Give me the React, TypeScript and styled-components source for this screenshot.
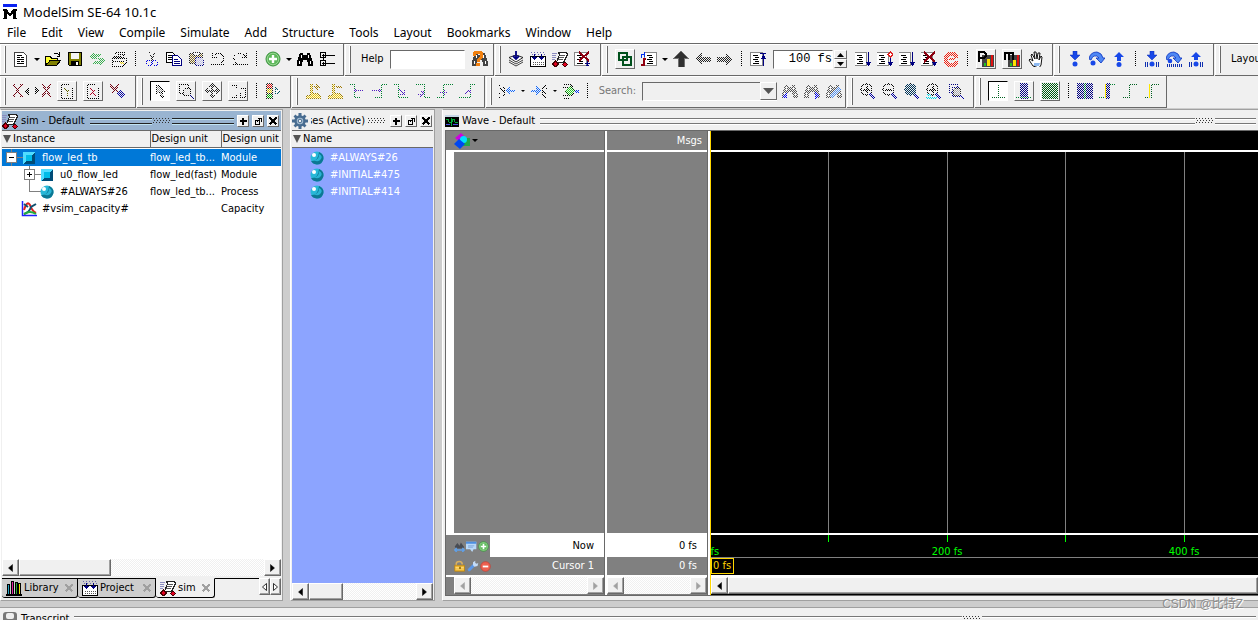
import React from "react";
import styled, { createGlobalStyle, css } from "styled-components";

const GlobalStyle = createGlobalStyle`
  *, *::before, *::after { box-sizing: border-box; }
  html, body { margin: 0; padding: 0; }
  body { background: #f0f0f0; color: #000; overflow: hidden; }
  body, button, input, select, table {
    font-family: "DejaVu Sans Condensed", "Noto Sans", sans-serif;
    font-size: 11px;
    line-height: 14px;
  }
  button { padding: 0; border: 0; background: none; color: inherit; }
`;

/* ---------- icons ---------- */

const navy = "#000080";

const doc = (
  <>
    <path d="M1.500 1.500h9l3 3v11h-12z" fill="#fff" stroke="#444" />
    <path d="M4 4.500h5M4 6.500h3M8 6.500h3M4 8.500h7M4 10.500h3M8 10.500h3M4 12.500h7" stroke="#000" />
  </>
);

const page = (
  <>
    <path d="M.5 1.500h12v13h-12z" fill="#fff" stroke="#888" />
    <path d="M3 4.500h5M5 6.500h4M3 8.500h5M5 10.500h4M3 12.500h6" stroke="#000" />
  </>
);

const binoculars = (
  <>
    <path d="M3 2h3v2h4V2h3l3 9v4h-5v-4h-1V9H6v2H5v4H0v-4z" />
    <path d="M4.500 4v3M11.500 4v3M2.500 10v3M13.500 10v3" stroke="#fff" />
  </>
);

const magnifier = (
  <>
    <circle cx="6.500" cy="6.500" r="5.500" fill="none" stroke="#111" />
    <path d="M10 11l5 5" stroke="#0000a0" strokeWidth="2" />
  </>
);

const car = (
  <>
    <path d="M6.500 1.500h8l1 2-4 8h-7l3-8z" fill="#fff" stroke="#222" />
    <path d="M8 4.500h5M7 6.500h5M6 8.500h5" stroke="#555" />
    <path d="M0 2.500h5M0 4.500h4M0 6.500h4M0 8.500h3" stroke="#8c8cc0" />
    <path d="M3.500 10l3 3-3 3-3-3z" fill="#e00020" stroke="#400" />
    <path d="M13 11l2.500 2.500L13 16l-2.500-2.500z" fill="#e00020" stroke="#400" />
  </>
);

const edge = (d: string, m: string) => (
  <>
    <path d={d} fill="none" stroke="#008030" />
    <path d={m} fill="none" stroke="#5020c0" />
  </>
);

const downArrow = (
  <path d="M6 0h4v4h3l-5 5-5-5h3z" fill="#1848e8" stroke="#0828b0" strokeWidth=".5" />
);

const curve = (
  <path d="M0 8Q1 1 8 1q5 1 6 6h2l-4 5-5-5h3Q8 4 5 5 3 6 2 9z" fill="#4f88f4" stroke="#0830c0" strokeWidth=".8" />
);

const footMarks = <path d="M1.500 11v5M3.500 11v5M12.500 11v5M14.500 11v5" stroke="#1030b0" />;

const icons: Record<string, React.ReactNode> = {
  logo: (
    <>
      <path d="M1 0h14v3H1z" fill="#0a22f0" />
      <path d="M1 15v-1h1V7H1V5h4l3 5 3-5h4v2h-1v7h1v1h-4V9l-3 4-3-4v6z" />
    </>
  ),
  doc,
  open: (
    <>
      <path d="M.5 14V5.500h5l1 2h6V10H5z" fill="#ffff30" stroke="#000" />
      <path d="M1 14.500l4-5h10.500l-4 5z" fill="#808000" stroke="#000" />
      <path d="M9 3q2-2 4 0l1 1m.5-3v4h-3" fill="none" stroke="#000" />
    </>
  ),
  save: (
    <>
      <path d="M1.500 1.500h13v13h-12l-1-1z" fill="#808000" stroke="#000" />
      <path d="M4 2h8v6H4z" fill="#f4f4f4" />
      <path d="M4 10h8v5H4z" />
      <path d="M9 11h2v3H9z" fill="#fff" />
    </>
  ),
  refresh: (
    <path d="M0 6l4-4 3 1h6l-2 3H6l2 2H2zM16 10l-4 5-3-2H4l1-3h5L9 7h5z" fill="#3aae50" />
  ),
  print: (
    <>
      <path d="M5 1.500h9l-2 5H3zM1 7.500h14v5l-3 3H1z" fill="#f6f6f6" stroke="#000" />
      <path d="M6 3.500h6M5 5.500h5M2 10.500h12" stroke="#000" />
      <path d="M9 11h4v2H9z" fill="#f0d000" />
    </>
  ),
  cut: (
    <>
      <path d="M5 1l4 9M11 1L7 10" stroke="#222" />
      <circle cx="5" cy="12" r="2.500" fill="none" stroke="#0000e0" />
      <circle cx="11" cy="12" r="2.500" fill="none" stroke="#0000e0" />
    </>
  ),
  copy: (
    <>
      <path d="M.5 1.500h6l3 3v7h-9z" fill="#fff" stroke="#000" />
      <path d="M2 4.500h4M2 6.500h5M2 8.500h5" stroke="#000" />
      <path d="M6.500 4.500h5l4 4v6h-9z" fill="#fff" stroke={navy} />
      <path d="M8 8.500h4M8 10.500h6M8 12.500h6" stroke={navy} />
    </>
  ),
  paste: (
    <>
      <path d="M1.500 2.500h13v10h-13z" fill="#806820" stroke="#222" />
      <path d="M5 1h6v3H5z" fill="#fff" stroke="#222" />
      <path d="M7.500 6.500h6l2 2v6h-8z" fill="#c0c0e8" stroke={navy} />
    </>
  ),
  undo: <path d="M2 1v5h5M2 6q4-5 9-3 5 3 2 7l-2 3M0 13.500h15" fill="none" stroke="#000" />,
  redo: <path d="M14 1v5H9M14 6q-4-5-9-3-5 3-2 7l2 3M1 13.500h15" fill="none" stroke="#000" />,
  add: (
    <g shapeRendering="auto">
      <circle cx="8" cy="8" r="7" fill="#5db85a" stroke="#3c9440" />
      <circle cx="8" cy="8" r="5.800" fill="none" stroke="#a8dca2" strokeWidth=".8" />
      <path d="M8 4v8M4 8h8" stroke="#fff" strokeWidth="2.400" />
    </g>
  ),
  remove: (
    <g shapeRendering="auto">
      <circle cx="8" cy="8" r="7" fill="#ec6050" stroke="#c43c30" />
      <path d="M4 8h8" stroke="#fff" strokeWidth="2.600" />
    </g>
  ),
  binoculars,
  binocHelp: (
    <>
      <g fill="#444">{binoculars}</g>
      <path d="M2 5q0-4 4-4t4 4q0 2-4 4v2" fill="none" stroke="#f08010" strokeWidth="3" />
      <path d="M4 12h4v3H4z" fill="#f08010" />
    </>
  ),
  tree: (
    <path d="M1.500 1.500h5v5h-5zM3 4.500h3M1.500 9.500h5v5h-5zM3 12.500h3M4.500 7v3M7 4.500h9M7 12.500h9M4.500 3v3M4.500 11v3" fill="none" stroke="#000" />
  ),
  compile: (
    <g shapeRendering="auto">
      <path d="M1 11l7 4 7-4M1 9l7 4 7-4" fill="#fff" stroke="#111" strokeWidth=".8" />
      <path d="M1 6.500L8 4l7 2.500L8 11z" fill="#fff" stroke="#111" strokeWidth=".9" />
      <path d="M8 0v7M5 5l3 3 3-3" fill="none" stroke={navy} strokeWidth="1.800" />
    </g>
  ),
  compileAll: (
    <>
      <path d="M.5 5.500h15v10H.5z" fill="#fff" stroke="#000" />
      <path d="M1 1.500h15M2 3.500h14" stroke="#6868b0" strokeDasharray="1 2" />
      <path d="M4.500 3v6M11.500 3v6" stroke={navy} />
      <path d="M2 6h5v1H6v1H3V7H2zM9 6h5v1h-1v1h-3V7H9z" fill={navy} />
      <path d="M3 11.500h11M3 13.500h11" stroke="#555" strokeDasharray="1 1" />
    </>
  ),
  car,
  breakSim: (
    <>
      {page}
      <path d="M5 1l10 9M15 1L5 10" stroke="#8c0010" strokeWidth="2" />
      <path d="M13.500 10v5M11 12.500h5M12 14.500h3" fill="none" stroke={navy} />
    </>
  ),
  link: (
    <g fill="none" stroke="#00501c" strokeWidth="2">
      <path d="M2 2h8v7H2z" />
      <path d="M6 6h8v8H6z" />
    </g>
  ),
  restart: (
    <>
      <g transform="translate(3 0)">{page}</g>
      <path d="M.5 7V3H4M3 1v5" fill="none" stroke="#0030f0" />
      <path d="M0 14h3V8h2" fill="none" stroke="#900010" strokeWidth="2" />
    </>
  ),
  up: <path d="M8 0l7 7h-4v9H5V7H1z" fill="#303030" stroke="#707070" />,
  left: <path d="M0 8l7-6v4h9v5H7v4z" fill="#222" />,
  right: <path d="M16 8L9 2v4H0v5h9v4z" fill="#222" />,
  runTo: (
    <>
      {page}
      <path d="M10 2.500h6M13.500 3v12" fill="none" stroke={navy} />
      <path d="M13 3h1v2h1v2h1v1h-5V7h1V5h1z" fill={navy} />
    </>
  ),
  run: (
    <>
      <g transform="translate(-1 0)">{page}</g>
      <path d="M13.500 1v13" stroke={navy} />
      <path d="M11 11h5v1h-1v2h-1v1h-1v-1h-1v-2h-1z" fill={navy} />
    </>
  ),
  runContinue: (
    <>
      <g transform="translate(-1 0)">{page}</g>
      <path d="M13.500 7v7" stroke={navy} />
      <path d="M11 11h5v1h-1v2h-1v1h-1v-1h-1v-2h-1z" fill={navy} />
      <path d="M13.500 1L16 3.500 13.500 6 11 3.500z" fill="#fff" stroke="#e02020" />
    </>
  ),
  runStop: (
    <>
      <g transform="translate(-1 0)">{page}</g>
      <path d="M3 1l11 10M14 1L3 11" stroke="#8c0010" strokeWidth="2" />
      <path d="M11 11h5v1h-1v2h-1v1h-1v-1h-1v-2h-1z" fill={navy} />
    </>
  ),
  stop: (
    <path d="M4 1h7l4 4v2h-4L9 5H7L5 7v3l2 2h2l2-2h4v2l-4 4H4l-3-4V5zM6 7h6v2H6z" fill="#f02010" />
  ),
  profileP: (
    <>
      <path d="M4 4h12v12H4z" fill="#444" />
      <path d="M6 12h2v3H6z" fill="#20c020" />
      <path d="M9 8h3v7H9z" fill="#ffe000" />
      <path d="M13 4h2v11h-2z" fill="#e01010" />
      <path d="M0 0h6l3 2v4L6 8H2v3H0zM2 2v4h4l1-2-1-2z" fillRule="evenodd" />
    </>
  ),
  profileM: (
    <>
      <path d="M4 4h12v12H4z" fill="#444" />
      <path d="M6 12h2v3H6z" fill="#20c020" />
      <path d="M9 9h3v6H9z" fill="#ffe000" />
      <path d="M13 4h2v11h-2z" fill="#e01010" />
      <path d="M0 1h9l1 1v7H8V3H6v6H4V3H2v6H0z" />
    </>
  ),
  hand: (
    <g shapeRendering="auto">
      <path d="M5 15L1 9l1-1 3 2-2-6 1-1 3 5-1-7h2l1 7 1-6h2l-1 7 2-4 1 1-1 8-2 3z" fill="#fff" stroke="#111" />
      <path d="M6 12h6l-1 3H6z" fill="#8cb8f0" />
    </g>
  ),
  stepInto: (
    <g shapeRendering="auto">
      {downArrow}
      <circle cx="8" cy="13" r="2.500" fill="#1848e8" />
    </g>
  ),
  stepOver: (
    <g shapeRendering="auto">
      {curve}
      <circle cx="4" cy="12" r="2.500" fill="#1848e8" />
    </g>
  ),
  stepOut: (
    <g shapeRendering="auto">
      <path d="M6 10V6H3l5-5 5 5h-3v4z" fill="#1848e8" />
      <circle cx="8" cy="13.500" r="2.500" fill="#1848e8" />
    </g>
  ),
  stepIntoB: (
    <>
      <g shapeRendering="auto">
        {downArrow}
        <circle cx="8" cy="13" r="2.500" fill="#1848e8" />
      </g>
      {footMarks}
    </>
  ),
  stepOverB: (
    <>
      <g shapeRendering="auto">
        {curve}
        <circle cx="4" cy="10" r="2.300" fill="#1848e8" />
      </g>
      <path d="M1 14.500h15" stroke="#1030b0" strokeWidth="3" strokeDasharray="1 1" />
    </>
  ),
  stepOutB: (
    <>
      <g shapeRendering="auto">
        <path d="M6 9V6H3l5-5 5 5h-3v3z" fill="#1848e8" />
        <circle cx="8" cy="13" r="2.500" fill="#1848e8" />
      </g>
      {footMarks}
    </>
  ),
  crossLeft: (
    <>
      <path d="M0 1l9 13M9 1L0 14" stroke="#700010" strokeWidth="2" />
      <path d="M16 3v9l-5-4z" />
    </>
  ),
  crossRight: (
    <>
      <path d="M7 1l9 13M16 1L7 14" stroke="#700010" strokeWidth="2" />
      <path d="M0 3v9l5-4z" />
    </>
  ),
  sheetY: (
    <>
      <path d="M2.500 1.500h8l3 3v11h-11z" fill="none" stroke="#000" />
      <path d="M5 5l3 4 3-4M8.500 9v5" fill="none" stroke="#606000" />
    </>
  ),
  sheetX: (
    <>
      <path d="M2.500 1.500h8l3 3v11h-11z" fill="none" stroke="#000" />
      <path d="M5 5l6 8M11 5l-6 8" fill="none" stroke="#b00020" />
    </>
  ),
  crossTag: (
    <>
      <path d="M1 2l9 8M10 1L3 10" stroke="#700010" strokeWidth="2" />
      <path d="M8 9l3-2 5 5-3 4-5-4z" fill="#0808a0" />
    </>
  ),
  pointer: <path d="M4 1v11l3-3 3 6 2-1-3-6h4z" fill="#999" stroke="#000" />,
  zoomArea: (
    <>
      <path d="M1.500 1.500h9v9h-9z" fill="none" stroke="#000" />
      <circle cx="9" cy="9" r="4" fill="#ddd" stroke="#000" />
      <path d="M12 12l4 4" stroke={navy} strokeWidth="2" />
    </>
  ),
  move: <path d="M8 0l4 4H9v3h3V4l4 4-4 4V9H9v3h3l-4 4-4-4h3V9H4v3L0 8l4-4v3h3V4H4z" fill="#222" />,
  edgeBox: <path d="M1 2.500h5.500V6M6.500 11v3.500H1M10 14.500h5.500v-9H10M10.500 10v5" fill="none" stroke="#000" />,
  traffic: (
    <>
      <path d="M1 0h7v16H1z" fill="#222" />
      <path d="M2 1h5v4H2z" fill="#e00000" />
      <path d="M2 6h5v4H2z" fill="#e0c000" />
      <path d="M2 11h5v4H2z" fill="#00b000" />
      <path d="M10 4l5 4-5 4z" fill="#fff" stroke="#005060" />
    </>
  ),
  cursorAdd: (
    <>
      <path d="M5 1h2v9h6v2h2v3H1v-3h4z" fill="#f0c800" stroke="#a08000" />
      <path d="M9 4h6M12 1v6" stroke="#a07800" strokeWidth="2" />
    </>
  ),
  cursorDel: (
    <>
      <path d="M5 1h2v9h6v2h2v3H1v-3h4z" fill="#f0c800" stroke="#a08000" />
      <path d="M9 4h6" stroke="#a07800" strokeWidth="2" />
    </>
  ),
  edge1: edge("M0 1.500h5.500v13H12", "M14 7.500H7M10 4L6 7.500 10 11"),
  edge2: edge("M4 14.500h6.500v-13H16", "M0 7.500h8M5 4l4 3.500L5 11"),
  edge3: edge("M0 1.500h5.500v13H16", "M6 6l5 5M11 6v5H6"),
  edge4: edge("M0 1.500h9.500v13H16", "M2 11h6M5 8l4 3-4 3M8 7v4"),
  edge5: edge("M0 14.500h6.500v-13H16", "M3 9h7M7 6v7"),
  edge6: edge("M0 14.500h11.500v-13H16", "M5 11l7-4M9 7l3 4"),
  mergeLeft: (
    <>
      <path d="M0 2l5 3v7l-5 3M0 5l5 3-5 3" fill="none" stroke="#000" />
      <path d="M16 7H11V3L6 8l5 5V9h5z" fill="#1068ff" />
    </>
  ),
  mergeRight: (
    <>
      <path d="M16 2l-5 3v7l5 3M16 5l-5 3 5 3" fill="none" stroke="#000" />
      <path d="M0 7h5V3l5 5-5 5V9H0z" fill="#1068ff" />
    </>
  ),
  mergeBoth: (
    <>
      <path d="M0 1h7l4 5M0 4h5M0 12h5M0 15h7l4-5" fill="none" stroke="#000" />
      <path d="M7 3l5 5-5 5-5-5z" fill="#20d020" stroke="#006000" />
      <path d="M12 8h4" stroke="#0030f0" strokeWidth="3" />
    </>
  ),
  findPrev: (
    <>
      <g fill="#555">{binoculars}</g>
      <path d="M0 13l5-4v7z" fill="#0000f0" />
    </>
  ),
  findNext: (
    <>
      <g fill="#555">{binoculars}</g>
      <path d="M16 13l-5-4v7z" fill="#0000f0" />
    </>
  ),
  findTool: (
    <>
      <g fill="#555">{binoculars}</g>
      <path d="M5 14l9-9" stroke="#5090f0" strokeWidth="3" />
    </>
  ),
  zoomIn: (
    <>
      {magnifier}
      <path d="M6.500 3v7M3 6.500h7" stroke="#000" strokeWidth="2" />
    </>
  ),
  zoomOut: (
    <>
      {magnifier}
      <path d="M3 6.500h7" stroke="#000" strokeWidth="2" />
    </>
  ),
  zoomFull: (
    <>
      {magnifier}
      <circle cx="6.500" cy="6.500" r="6" fill="#003458" />
    </>
  ),
  zoomCursor: (
    <>
      {magnifier}
      <path d="M6.500 3v7M3 6.500h7" stroke="#000" strokeWidth="2" />
      <path d="M0 15h11M1 12h4" stroke="#00d8e8" strokeWidth="2" />
    </>
  ),
  zoomRange: (
    <>
      <path d="M1.500 1.500h8v8h-8zM4.500 4.500h7v9h-7z" fill="none" stroke={navy} />
      <circle cx="9" cy="9" r="4" fill="#aaa" stroke="#222" />
      <path d="M12 12l4 4" stroke="#0000a0" strokeWidth="2" />
    </>
  ),
  waveLine: <path d="M8.500 2v12M1 14.500h15" stroke="#006020" />,
  waveBand: (
    <>
      <path d="M4 0h8v16H4z" fill={navy} />
      <path d="M0 14.500h16" stroke="#008030" />
    </>
  ),
  waveFill: <path d="M0 0h16v16H0z" fill="#005c10" />,
  waveBlock: (
    <>
      <path d="M0 0h16v16H0z" fill={navy} />
      <path d="M8 0v16" stroke="#008030" strokeWidth="2" />
    </>
  ),
  waveEdgeBand: (
    <>
      <path d="M7 0h4v16H7z" fill={navy} />
      <path d="M0 14.500h5M11 1.500h5" fill="none" stroke="#008030" />
    </>
  ),
  waveEdge: <path d="M1 14.500h7.500v-13H16" fill="none" stroke="#006020" />,
  yellowBar: <path d="M5 0h1v16H5z" fill="#ffe800" />,
  block: (
    <>
      <path d="M2 2h12v12H2z" fill="#00bce8" />
      <path d="M2 2h12l-3 3H5v6l-3 3z" fill="#50dcff" />
      <path d="M14 2v12H2l3-3h6V5z" fill="#004c78" />
    </>
  ),
  ball: (
    <g shapeRendering="auto">
      <circle cx="8" cy="8" r="6.500" fill="#28b8d8" />
      <path d="M2 11Q9 12 10 2q5 2 4.500 7-1.500 6-7 5.500-4-.5-5.500-3.500z" fill="#0c7894" />
      <path d="M5 10Q10 10 10 4q4 2 2 5-3 4-7 1z" fill="#28b4d4" />
      <circle cx="5" cy="5" r="2" fill="#fff" />
    </g>
  ),
  capacity: (
    <g shapeRendering="auto">
      <path d="M1.500 0v14.500H16" fill="none" stroke="#2020ff" strokeWidth="1.500" />
      <path d="M3 9q3-10 6-5 2 6 6 8" fill="none" stroke="#e02020" strokeWidth="2" />
      <path d="M3 13q5-1 7-7l5-3M3 3l4 3" fill="none" stroke="#105070" strokeWidth="2" />
      <path d="M3 13q6-4 12 0" fill="none" stroke="#20b040" strokeWidth="2" />
    </g>
  ),
  gear: (
    <g shapeRendering="auto">
      <path d="M6.500 0h3v3h-3zM6.500 13h3v3h-3zM0 6.500h3v3H0zM13 6.500h3v3h-3zM1.500 3.500l2-2L6 4 4 6zM10 4l2.500-2.500 2 2L12 6zM4 10l2 2-2.500 2.500-2-2zM12 10l2.500 2.500-2 2L10 12z" fill="#486c90" />
      <circle cx="8" cy="8" r="4.500" fill="#a8c0d4" stroke="#486c90" strokeWidth="2.500" />
      <circle cx="8" cy="8" r="1.800" fill="#f0f0f0" stroke="#486c90" />
    </g>
  ),
  wave: (
    <>
      <path d="M0 1h16v14H0z" fill="#000" />
      <path d="M0 1h16v2H0z" fill="#c8d8e8" />
      <path d="M1 6.500h3v3h4v-3h3v3h4M7.500 5v9" fill="none" stroke="#00c040" />
      <path d="M1 12.500h5M9 12.500h6" stroke="#5060ff" />
    </>
  ),
  shapes: (
    <g shapeRendering="auto">
      <path d="M1 5l6-5 4 4-5 5z" fill="#d000e0" />
      <path d="M8 5h8v8H8z" fill="#20a848" />
      <circle cx="9.500" cy="6.500" r="3.500" fill="#00e0ff" />
      <path d="M5 6l6 5-5 5-6-5z" fill="#0048f0" />
    </g>
  ),
  library: (
    <>
      <path d="M0 14h16v2H0z" />
      <path d="M1.500 4.500h2v10h-2z" fill="#20a0c0" stroke="#000" />
      <path d="M5.500 1.500h2v13h-2z" fill="#e020a0" stroke="#000" />
      <path d="M9.500 2.500h2v12h-2z" fill="#20a030" stroke="#000" />
      <path d="M12.500 3.500h2v11h-2z" fill="#f0e000" stroke="#000" />
    </>
  ),
  edit: (
    <g shapeRendering="auto">
      <path d="M1 8l4-5 3 4 2-5 5 7-3 2H3z" fill="#484c54" />
      <path d="M1 13h14M4 10l-3 3 3 3M12 10l3 3-3 3" fill="none" stroke="#60a0e8" strokeWidth="2" />
    </g>
  ),
  form: (
    <g shapeRendering="auto">
      <path d="M0 1h15v11h-4l-2 4-3-4H0z" fill="#b8d8f8" />
      <path d="M0 1h15v3H0z" fill="#4c8ee0" />
      <path d="M3 7h9M3 9h7" stroke="#6c98d0" />
    </g>
  ),
  lock: (
    <g shapeRendering="auto">
      <path d="M3 8V5q0-3 4-3t4 4" fill="none" stroke="#d8b060" strokeWidth="2" />
      <path d="M1 7h13v8H1z" fill="#f0b830" stroke="#b88010" />
      <path d="M2 10h11M2 12h11" stroke="#ffe090" />
      <path d="M7 9h2v3H7z" fill="#806000" />
    </g>
  ),
  wrench: (
    <g shapeRendering="auto">
      <path d="M3 13l6-6" stroke="#5c98e8" strokeWidth="4" strokeLinecap="round" />
      <path d="M8 7V3l3-2v3l2 1 2-1-1 4-4 1z" fill="#c4dcf8" />
    </g>
  ),
  transcript: (
    <g shapeRendering="auto">
      <rect x="1" y="1" width="14" height="14" rx="3" fill="#777" />
      <rect x="4" y="2" width="8" height="6" rx="2" fill="#eee" />
    </g>
  ),
  plus: <path d="M6 1h4v5h5v4h-5v5H6v-5H1V6h5z" />,
  undock: <path d="M2 6h8v8H2zM7 2h7v7M14 2L6 10" fill="none" stroke="#000" strokeWidth="2" />,
  close: <path d="M1 1l14 14M15 1L1 15" stroke="#000" strokeWidth="3" />,
  closeTab: <path d="M1 1l14 14M15 1L1 15" stroke="#a0a0a0" strokeWidth="4" />,
};

const Glyph = styled.svg<{ $size: number }>`
  display: block;
  flex: none;
  width: ${(p) => p.$size}px;
  height: ${(p) => p.$size}px;
`;

function Icon({ name, dim = false, size = 16 }: { name: string; dim?: boolean; size?: number }) {
  const marked = name === "waveEdgeBand" || name === "waveEdgeY";
  const shape = name === "waveEdgeY" ? "waveEdge" : name;
  return (
    <Glyph $size={size} viewBox="0 0 16 16" shapeRendering="crispEdges" aria-hidden="true">
      <g mask={dim ? "url(#stipple)" : undefined}>{icons[shape]}</g>
      {marked && <path d="M6 1h1v14H6z" fill="#ffe800" />}
    </Glyph>
  );
}

const Defs = styled.svg`
  position: absolute;
  width: 0;
  height: 0;
`;

/* ---------- frame ---------- */

const Page = styled.div`
  display: flex;
  flex-direction: column;
  height: 100vh;
  overflow: hidden;
`;

const TitleBar = styled.header`
  display: flex;
  flex: none;
  align-items: center;
  gap: 5px;
  height: 24px;
  padding: 0 2px;
  background: #fff;
  font-family: "Noto Sans", sans-serif;
  font-size: 13px;
`;

const Menu = styled.nav`
  display: flex;
  flex: none;
  align-items: flex-start;
  gap: 15px;
  height: 19px;
  padding: 0 7px;
  background: #fff;
  button {
    font-family: "Noto Sans", sans-serif;
    font-size: 12px;
    line-height: 17px;
  }
`;

const Bars = styled.div`
  flex: none;
  border-top: 1px solid #696969;
  overflow: hidden;
`;

const BarRow = styled.div`
  display: flex;
  gap: 1px;
`;

const Bar = styled.div<{ $width: number }>`
  display: flex;
  flex: none;
  align-items: center;
  width: ${(p) => p.$width}px;
  height: 32px;
  padding: 0 0 1px 4px;
  border: solid #696969;
  border-width: 0 1px 1px 0;
  box-shadow: inset 1px 1px #fff;
  &::before {
    content: "";
    width: 2px;
    height: 27px;
    margin-right: 4px;
    border-right: 1px solid #696969;
    background: #fff;
  }
`;

const Tool = styled.button<{ $kind?: "raised" | "pressed" }>`
  display: flex;
  flex: none;
  align-items: center;
  justify-content: center;
  width: 22px;
  height: 22px;
  ${(p) =>
    p.$kind &&
    css`
      width: 20px;
      height: 20px;
      margin: 0 3px;
      border: 1px solid;
      border-color: ${p.$kind === "raised" ? "#fff #696969 #696969 #fff" : "#000 #fff #fff #000"};
      background: ${p.$kind === "raised" ? "#f0f0f0" : "#fff"};
    `}
`;

const Caret = styled.button<{ $small?: boolean }>`
  display: flex;
  flex: none;
  justify-content: center;
  width: 10px;
  &::after {
    content: "";
    border: solid transparent;
    border-width: ${(p) => (p.$small ? "2px 2px 0" : "3px 3px 0")};
    border-top-color: #000;
  }
`;

const Separator = styled.span`
  flex: none;
  width: 11px;
  height: 16px;
  background: repeating-linear-gradient(#000 0 1px, transparent 1px 2px) center / 1px 100% no-repeat;
`;

const BarLabel = styled.label<{ $dim?: boolean }>`
  padding: 0 6px;
  color: ${(p) => (p.$dim ? "#777" : "#000")};
  white-space: nowrap;
`;

const sunken = css`
  border: 1px solid;
  border-color: #696969 #fff #fff #696969;
  border-radius: 0;
  outline: 0;
`;

const Field = styled.input<{ $width: number; $mono?: boolean }>`
  ${sunken}
  flex: none;
  width: ${(p) => p.$width}px;
  height: 19px;
  margin: 0 4px 0 0;
  padding: 0;
  background: #fff;
  ${(p) =>
    p.$mono &&
    css`
      margin: 0 1px 0 4px;
      font-family: "Liberation Mono", monospace;
      font-size: 12px;
      text-align: right;
    `}
`;

const Spinner = styled.span`
  display: flex;
  flex-direction: column;
  flex: none;
  width: 13px;
  margin-right: 5px;
  button {
    display: flex;
    align-items: center;
    justify-content: center;
    height: 9px;
    border: 1px solid;
    border-color: #fff #696969 #696969 #fff;
  }
`;

const SearchSelect = styled.select`
  ${sunken}
  appearance: none;
  width: 135px;
  height: 19px;
  background: #f0f0f0;
`;

const SelectBox = styled.span`
  display: grid;
  flex: none;
  align-items: center;
  justify-items: end;
  margin-right: 2px;
  > * { grid-area: 1 / 1; }
`;

const DropFace = styled.span`
  display: flex;
  align-items: center;
  justify-content: center;
  width: 17px;
  height: 18px;
  border: 1px solid;
  border-color: #fff #696969 #696969 #fff;
  background: #f0f0f0;
  pointer-events: none;
`;

/* ---------- panes ---------- */

const Work = styled.main`
  display: flex;
  flex: 1;
  gap: 7px;
  min-height: 0;
  padding: 1px 0 6px;
  background: #cdcdcd;
`;

const Pane = styled.section<{ $width?: number }>`
  display: flex;
  flex-direction: column;
  ${(p) => (p.$width ? `flex: none; width: ${p.$width}px;` : "flex: 1; min-width: 0;")}
  padding: ${(p) => (p.$width ? "1px 1px 0" : "1px 0 0 2px")};
  border: solid #a0a0a0;
  border-width: 1px ${(p) => (p.$width ? 1 : 0)}px 1px 1px;
  border-left-color: #fff;
  background: #f0f0f0;
`;

const Rule = styled.span<{ $grow?: number }>`
  flex: ${(p) => p.$grow ?? 1} 1 0;
  height: 6px;
  border: solid #777;
  border-width: 1px 0;
  box-shadow: 0 1px #fff, inset 0 1px #fff;
`;

const PaneTitle = styled.header<{ $active?: boolean }>`
  display: flex;
  flex: none;
  align-items: center;
  gap: 3px;
  height: 19px;
  padding-right: 2px;
  background: ${(p) => (p.$active ? "#99b4d1" : "#f0f0f0")};
  overflow: hidden;
  h2 {
    flex: none;
    margin: 0 2px 0 0;
    font-size: 11px;
    font-weight: normal;
    white-space: nowrap;
  }
  ${(p) =>
    p.$active &&
    css`
      ${Rule} {
        border-color: #222;
        box-shadow: 0 1px #c0e4f4, inset 0 1px #c0e4f4;
      }
    `}
`;

const ClippedTitle = styled.span`
  display: flex;
  flex: none;
  justify-content: flex-end;
  width: 56px;
  overflow: hidden;
`;

const Grip = styled.span`
  flex: none;
  width: 18px;
  height: 6px;
  margin: 0 -2px;
  background:
    linear-gradient(#222, #222) 0 0 / 1px 1px,
    transparent;
  background:
    repeating-linear-gradient(90deg, #333 0 1px, transparent 1px 3px) 0 0 / 100% 1px no-repeat,
    repeating-linear-gradient(90deg, transparent 0 1px, #333 1px 2px, transparent 2px 3px) 0 2px / 100% 1px no-repeat,
    repeating-linear-gradient(90deg, #333 0 1px, transparent 1px 3px) 0 4px / 100% 1px no-repeat;
`;

const PaneButton = styled.button`
  display: flex;
  flex: none;
  align-items: center;
  justify-content: center;
  width: 12px;
  height: 12px;
  border: 1px solid;
  border-color: #fff #696969 #696969 #fff;
  background: #f0f0f0;
`;

const Grid = styled.table`
  width: 100%;
  border-collapse: collapse;
  table-layout: fixed;
  th, td {
    padding: 0;
    overflow: hidden;
    font-weight: normal;
    text-align: left;
    white-space: nowrap;
  }
  th {
    height: 17px;
    padding-left: 1px;
    border: solid #696969;
    border-width: 1px 1px 1px 0;
    background: #f0f0f0;
  }
  th:last-child { border-right: 0; }
  td { height: 17px; }
  tbody::before { content: ""; display: block; height: 1px; }
`;

const Row = styled.tr<{ $selected?: boolean }>`
  ${(p) => p.$selected && "background: #0078d7; color: #fff;"}
`;

const SortHead = styled.span`
  display: flex;
  align-items: center;
  &::before {
    content: "";
    width: 0;
    margin: 0 2px 0 0;
    border: solid transparent;
    border-width: 8px 4px 0;
    border-top-color: #555;
  }
`;

const Cell = styled.span<{ $indent: number }>`
  display: flex;
  align-items: center;
  gap: 5px;
  padding-left: ${(p) => p.$indent}px;
`;

const Twig = styled.svg`
  flex: none;
  width: 18px;
  height: 17px;
  margin-right: -8px;
`;

const List = styled.div<{ $blue?: boolean }>`
  flex: 1;
  min-height: 0;
  overflow: hidden;
  background: ${(p) => (p.$blue ? "#8ca4ff" : "#fff")};
  color: ${(p) => (p.$blue ? "#fff" : "#000")};
  thead { color: #000; }
`;

const Scroll = styled.div`
  display: flex;
  flex: none;
  height: 17px;
  background: repeating-conic-gradient(#fff 0 25%, #f0f0f0 0 50%) 0 0 / 2px 2px;
`;

const raised = css`
  border: 1px solid;
  border-color: #fff #696969 #696969 #fff;
  background: #f0f0f0;
  box-shadow: inset -1px -1px #a0a0a0;
`;

const ScrollButton = styled.button<{ $dim?: boolean; $next?: boolean }>`
  ${raised}
  display: flex;
  flex: none;
  align-items: center;
  justify-content: center;
  width: 17px;
  ${(p) => p.$next && "margin-left: auto;"}
  color: ${(p) => (p.$dim ? "#a0a0a0" : "#000")};
`;

const Thumb = styled.span<{ $width?: number }>`
  ${raised}
  ${(p) => (p.$width ? `width: ${p.$width}px;` : "flex: 1;")}
`;

function Arrow({ next = false, hollow = false }: { next?: boolean; hollow?: boolean }) {
  const d = next ? "M.5.5v7L4.500 4z" : "M4.500.5v7L.5 4z";
  return (
    <svg width="5" height="8" viewBox="0 0 5 8" aria-hidden="true">
      <path d={d} fill={hollow ? "#fff" : "currentColor"} stroke="currentColor" strokeWidth={hollow ? 0.8 : 0.5} />
    </svg>
  );
}

function ScrollBar({ dim = false, thumb }: { dim?: boolean; thumb?: number }) {
  return (
    <Scroll>
      <ScrollButton $dim={dim} aria-label="Scroll left"><Arrow /></ScrollButton>
      {thumb ? <Thumb $width={thumb} /> : null}
      <ScrollButton $dim={dim} $next aria-label="Scroll right"><Arrow next /></ScrollButton>
    </Scroll>
  );
}

const Tabs = styled.div`
  display: flex;
  flex: none;
  height: 24px;
  padding-top: 2px;
`;

const Tab = styled.button<{ $active?: boolean; $width: number }>`
  display: flex;
  flex: none;
  align-items: center;
  gap: 2px;
  width: ${(p) => p.$width}px;
  height: 20px;
  padding: 0 4px;
  border: solid #000;
  border-width: 1px 1px 1px 0;
  border-radius: 0 0 3px 3px;
  background: ${(p) => (p.$active ? "#f0f0f0" : "#cdcdcd")};
  border-top-color: ${(p) => (p.$active ? "#f0f0f0" : "#000")};
  svg:last-child { margin-left: auto; }
`;

const TabRest = styled.span`
  flex: 1;
  border-top: 1px solid #000;
`;

const TabArrow = styled.button`
  ${raised}
  display: flex;
  align-items: center;
  justify-content: center;
  width: 11px;
  height: 17px;
`;

/* ---------- wave window ---------- */

const waveRows = css`
  display: grid;
  grid-template-rows: 19px minmax(0, 1fr) 22px 18px 20px;
`;

const WaveBody = styled.div`
  display: flex;
  flex: 1;
  min-height: 0;
  margin-bottom: 4px;
  border: solid #696969;
  border-width: 1px 0 1px 1px;
  background: #808080;
  color: #fff;
`;

const WaveColumn = styled.div<{ $width: number }>`
  ${waveRows}
  flex: none;
  width: ${(p) => p.$width}px;
  margin-right: 3px;
  box-shadow: 1px 0 #696969, 3px 0 #fff;
`;

const WaveHead = styled.div<{ $end?: boolean }>`
  display: flex;
  align-items: center;
  justify-content: ${(p) => (p.$end ? "flex-end" : "flex-start")};
  padding: 0 5px 0 8px;
`;

const WaveArea = styled.div<{ $gutter?: boolean }>`
  border: solid #fff;
  border-width: 2px 0;
  ${(p) => p.$gutter && "border-left-width: 8px;"}
`;

const Value = styled.div<{ $light?: boolean }>`
  display: flex;
  align-items: center;
  justify-content: flex-end;
  padding-right: 10px;
  background: ${(p) => (p.$light ? "#fff" : "#808080")};
  color: ${(p) => (p.$light ? "#000" : "#fff")};
`;

const ValueTools = styled.span`
  display: flex;
  align-items: center;
  align-self: stretch;
  gap: 1px;
  width: 44px;
  margin-right: auto;
  padding-left: 8px;
  background: #808080;
`;

const ScrollSlot = styled.div<{ $inset?: boolean }>`
  padding: 0 0 1px ${(p) => (p.$inset ? 8 : 0)}px;
  border-top: 2px solid #fff;
`;

const Canvas = styled.div`
  ${waveRows}
  flex: 1;
  min-width: 0;
  background: #000;
  border-left: 1px solid #ffd700;
`;

const Plot = styled.svg`
  display: block;
  width: 100%;
  height: 100%;
  overflow: hidden;
`;

const PlotArea = styled.div`
  min-height: 0;
  border: solid #fff;
  border-width: 2px 0;
`;

const CursorLine = styled.div`
  border-top: 1px solid #808080;
`;

const CursorTag = styled.span`
  display: block;
  width: 23px;
  height: 16px;
  padding-left: 1px;
  border: 1px solid #ffd700;
  color: #ffd700;
`;

const Transcript = styled.footer`
  flex: none;
  height: 13px;
  padding: 1px 0 0 2px;
  border-top: 1px solid #a0a0a0;
  background: #f0f0f0;
  overflow: hidden;
`;

const Watermark = styled.span`
  position: absolute;
  right: 15px;
  bottom: 8px;
  color: #8c8c8c;
  font: 12px/16px "Liberation Sans", "Noto Sans CJK SC", sans-serif;
  text-shadow: 1px 1px #fff;
`;

/* ---------- content ---------- */

const menus = ["File", "Edit", "View", "Compile", "Simulate", "Add", "Structure", "Tools", "Layout", "Bookmarks", "Window", "Help"];

/* "|" separator, "v" drop-down caret, "." small caret; suffix "~" stippled, "+" raised, "!" pressed */
function Tools({ items }: { items: string }) {
  return (
    <>
      {items.split(" ").map((item, i) => {
        if (item === "|") return <Separator key={i} />;
        if (item === "v" || item === ".") return <Caret key={i} $small={item === "."} aria-label="More" />;
        const name = item.replace(/[~+!]/g, "");
        const kind = item.includes("+") ? "raised" : item.includes("!") ? "pressed" : undefined;
        return (
          <Tool key={i} $kind={kind} aria-label={name}>
            <Icon name={name} dim={item.includes("~")} />
          </Tool>
        );
      })}
    </>
  );
}

function PaneButtons() {
  return (
    <>
      <PaneButton aria-label="Zoom"><Icon name="plus" size={8} /></PaneButton>
      <PaneButton aria-label="Undock"><Icon name="undock" size={8} /></PaneButton>
      <PaneButton aria-label="Close"><Icon name="close" size={8} /></PaneButton>
    </>
  );
}

function Branch({ sign, last }: { sign?: "+" | "-"; last?: boolean }) {
  return (
    <Twig viewBox="0 0 18 17" shapeRendering="crispEdges" aria-hidden="true">
      <path d={last ? "M5.500 0v8.500H18" : "M5.500 0v17M5 8.500h13"} fill="none" stroke="#808080" />
      {sign && <path d="M.5 3.500h10v10H.5z" fill="#fff" stroke="#808080" />}
      {sign && <path d={sign === "+" ? "M3 8.500h5M5.500 6v5" : "M3 8.500h5"} stroke="#000" />}
    </Twig>
  );
}

const ticks = [117, 236, 354, 473];

export default function App() {
  return (
    <Page>
      <GlobalStyle />
      <Defs aria-hidden="true">
        <defs>
          <pattern id="checker" width="2" height="2" patternUnits="userSpaceOnUse">
            <path d="M0 0h1v1H0zM1 1h1v1H1z" fill="#fff" shapeRendering="crispEdges" />
          </pattern>
          <mask id="stipple" maskUnits="userSpaceOnUse" x="0" y="0" width="16" height="16">
            <rect width="16" height="16" fill="url(#checker)" />
          </mask>
        </defs>
      </Defs>

      <TitleBar><Icon name="logo" /><span>ModelSim SE-64 10.1c</span></TitleBar>
      <Menu>{menus.map((m) => <button key={m}>{m}</button>)}</Menu>

      <Bars>
        <BarRow>
          <Bar $width={344}>
            <Tools items="doc v open save refresh~ print~ | cut~ copy paste~ undo~ redo~ | add v binoculars tree" />
          </Bar>
          <Bar $width={149}>
            <BarLabel htmlFor="help">Help</BarLabel>
            <Field id="help" $width={75} />
            <Tools items="binocHelp" />
          </Bar>
          <Bar $width={106}><Tools items="compile compileAll car breakSim" /></Bar>
          <Bar $width={451}>
            <Tools items="link+ restart v up left~ right~ | runTo" />
            <Field $width={60} $mono defaultValue="100 fs" aria-label="Run length" />
            <Spinner>
              <button aria-label="Increase"><svg width="7" height="4"><path d="M0 4h7L3.500 0z" /></svg></button>
              <button aria-label="Decrease"><svg width="7" height="4"><path d="M0 0h7L3.500 4z" /></svg></button>
            </Spinner>
            <Tools items="run runContinue run runStop stop~ | profileP+ profileM+ hand" />
          </Bar>
          <Bar $width={160}><Tools items="stepInto stepOver stepOut | stepIntoB stepOverB stepOutB" /></Bar>
          <Bar $width={200}><BarLabel as="span">Layout</BarLabel></Bar>
        </BarRow>
        <BarRow>
          <Bar $width={136}><Tools items="crossLeft~ crossRight~ sheetY~+ sheetX~+ crossTag~" /></Bar>
          <Bar $width={154}><Tools items="pointer~! zoomArea~+ move~+ edgeBox~+ | traffic~" /></Bar>
          <Bar $width={193}><Tools items="cursorAdd~ cursorDel~ edge1~ edge2~ edge3~ edge4~ edge5~ edge6~" /></Bar>
          <Bar $width={360}>
            <Tools items="mergeLeft~ . mergeRight~ . mergeBoth~ |" />
            <BarLabel $dim htmlFor="search">Search:</BarLabel>
            <SelectBox>
              <SearchSelect id="search" />
              <DropFace>
                <svg width="11" height="6" aria-hidden="true"><path d="M0 0h11L5.500 6z" fill="#555" /></svg>
              </DropFace>
            </SelectBox>
            <Tools items="findPrev~ findNext~ findTool~" />
          </Bar>
          <Bar $width={127}><Tools items="zoomIn~ zoomOut~ zoomFull~ zoomCursor~ zoomRange~" /></Bar>
          <Bar $width={192}>
            <Tools items="waveLine~! waveBand~+ waveFill~+ | waveBlock~ waveEdgeBand~ waveEdge~ waveEdgeY~" />
          </Bar>
        </BarRow>
      </Bars>

      <Work>
        <Pane $width={283}>
          <PaneTitle $active>
            <Icon name="car" />
            <h2>sim - Default</h2>
            <Rule /><Grip /><Rule />
            <PaneButtons />
          </PaneTitle>
          <List>
            <Grid>
              <colgroup><col /><col width="71" /><col width="60" /></colgroup>
              <thead>
                <tr><th><SortHead>Instance</SortHead></th><th>Design unit</th><th>Design unit type</th></tr>
              </thead>
              <tbody>
                <Row $selected>
                  <td><Cell $indent={4}><Branch sign="-" /><Icon name="block" />flow_led_tb</Cell></td>
                  <td>flow_led_tb...</td><td>Module</td>
                </Row>
                <Row>
                  <td><Cell $indent={22}><Branch sign="+" /><Icon name="block" />u0_flow_led</Cell></td>
                  <td>flow_led(fast)</td><td>Module</td>
                </Row>
                <Row>
                  <td><Cell $indent={22}><Branch last /><Icon name="ball" />#ALWAYS#26</Cell></td>
                  <td>flow_led_tb...</td><td>Process</td>
                </Row>
                <Row>
                  <td><Cell $indent={19}><Icon name="capacity" />#vsim_capacity#</Cell></td>
                  <td /><td>Capacity</td>
                </Row>
              </tbody>
            </Grid>
          </List>
          <ScrollBar thumb={92} />
          <Tabs>
            <Tab $width={76}><Icon name="library" />Library<Icon name="closeTab" size={8} /></Tab>
            <Tab $width={78}><Icon name="compileAll" />Project<Icon name="closeTab" size={8} /></Tab>
            <Tab $width={59} $active><Icon name="car" />sim<Icon name="closeTab" size={8} /></Tab>
            <TabRest />
            <TabArrow aria-label="Previous tab"><Arrow hollow /></TabArrow>
            <TabArrow aria-label="Next tab"><Arrow next hollow /></TabArrow>
          </Tabs>
        </Pane>

        <Pane $width={145}>
          <PaneTitle>
            <Icon name="gear" />
            <ClippedTitle><h2>Processes (Active)</h2></ClippedTitle>
            <Grip /><Rule />
            <PaneButtons />
          </PaneTitle>
          <List $blue>
            <Grid>
              <thead><tr><th><SortHead>Name</SortHead></th></tr></thead>
              <tbody>
                {["#ALWAYS#26", "#INITIAL#475", "#INITIAL#414"].map((n) => (
                  <Row key={n}><td><Cell $indent={17}><Icon name="ball" />{n}</Cell></td></Row>
                ))}
              </tbody>
            </Grid>
          </List>
          <ScrollBar thumb={34} />
        </Pane>

        <Pane>
          <PaneTitle>
            <Icon name="wave" size={14} />
            <h2>Wave - Default</h2>
            <Rule $grow={655} /><Grip /><Rule $grow={41} />
          </PaneTitle>
          <WaveBody>
            <WaveColumn $width={158}>
              <WaveHead><Icon name="shapes" /><Caret aria-label="Format" /></WaveHead>
              <WaveArea $gutter />
              <Value $light>
                <ValueTools><Icon name="edit" size={11} /><Icon name="form" size={11} /><Icon name="add" size={11} /></ValueTools>
                Now
              </Value>
              <Value>
                <ValueTools><Icon name="lock" size={12} /><Icon name="wrench" size={12} /><Icon name="remove" size={11} /></ValueTools>
                Cursor 1
              </Value>
              <ScrollSlot $inset><ScrollBar dim /></ScrollSlot>
            </WaveColumn>
            <WaveColumn $width={100}>
              <WaveHead $end>Msgs</WaveHead>
              <WaveArea />
              <Value $light>0 fs</Value>
              <Value>0 fs</Value>
              <ScrollSlot><ScrollBar dim /></ScrollSlot>
            </WaveColumn>
            <Canvas>
              <span />
              <PlotArea>
                <Plot>
                  {ticks.map((x) => <rect key={x} x={x} y="0" width="1" height="100%" fill="#808080" />)}
                </Plot>
              </PlotArea>
              <Plot fill="#00ff00">
                {ticks.map((x) => <rect key={x} x={x} y="0" width="1" height="7" />)}
                <text x="-1" y="20" textAnchor="middle">0 fs</text>
                <text x="236" y="20" textAnchor="middle">200 fs</text>
                <text x="473" y="20" textAnchor="middle">400 fs</text>
              </Plot>
              <CursorLine><CursorTag>0 fs</CursorTag></CursorLine>
              <ScrollSlot>
                <Scroll>
                  <ScrollButton aria-label="Scroll left"><Arrow /></ScrollButton>
                  <Thumb />
                </Scroll>
              </ScrollSlot>
            </Canvas>
          </WaveBody>
        </Pane>
      </Work>

      <Transcript>
        <PaneTitle>
          <Icon name="transcript" />
          <h2>Transcript</h2>
          <Rule $grow={889} /><Grip /><Rule $grow={274} />
        </PaneTitle>
      </Transcript>
      <Watermark>CSDN @比特Z</Watermark>
    </Page>
  );
}
